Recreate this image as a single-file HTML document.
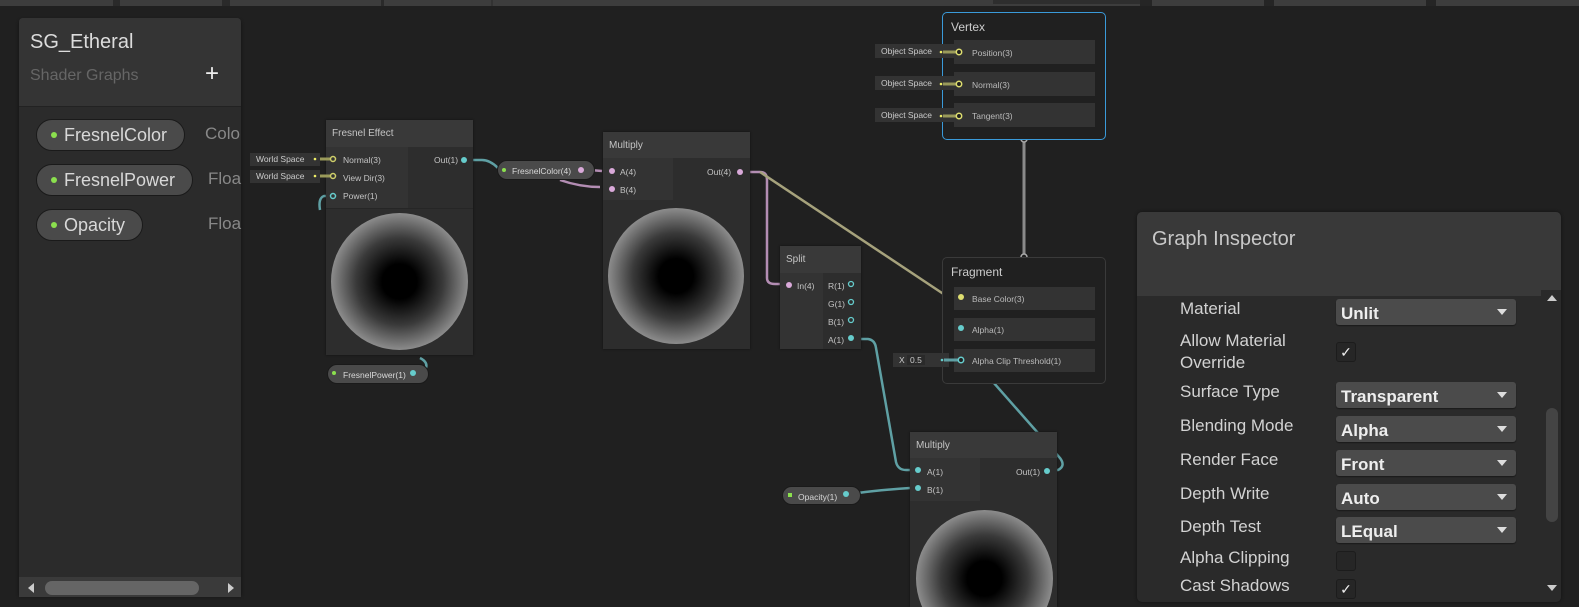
<!DOCTYPE html>
<html><head><meta charset="utf-8"><style>
*{margin:0;padding:0;box-sizing:border-box}
html{width:1579px;height:607px;overflow:hidden}
body{width:1579px;height:607px;background:#202020;position:relative;overflow:hidden;font-family:"Liberation Sans",sans-serif;color:#c8c8c8}
.a{position:absolute}
.node{position:absolute;background:#2d2d2d;box-shadow:0 0 2px #111;overflow:hidden}
.hd{position:absolute;left:0;right:0;top:0;background:#393939;font-size:10px;color:#c4c4c4;padding-left:6px}
.sm{font-size:8.5px;color:#c4c4c4;position:absolute;white-space:nowrap}
.sph{position:absolute;border-radius:50%;background:radial-gradient(circle,#000 0%,#000 18%,#3a3a3a 45%,#8a8a8a 70%,#d0d0d0 90%,#f0f0f0 100%)}
.pill{position:absolute;background:#4a4a4a;border:1.5px solid #1a1a1a;border-radius:18px;color:#d8d8d8;white-space:nowrap}
.gd{position:absolute;width:6px;height:6px;border-radius:50%;background:#8be04e}
.row{position:absolute;left:11px;width:141px;background:#333;font-size:8.5px;color:#bbb;padding-left:18px}
.os{position:absolute;background:#333;font-size:8.5px;color:#ccc;padding-left:6px;white-space:nowrap}
.lbl{position:absolute;left:43px;font-size:17px;color:#d2d2d2;white-space:nowrap}
.dd{position:absolute;left:199px;width:180px;height:26px;background:#4b4b4b;border-radius:3px;font-size:17px;font-weight:bold;color:#eee;padding:5px 0 0 5px;box-shadow:0 1px 1px #1a1a1a}
.dd:after{content:"";position:absolute;right:9px;top:10px;border-left:5px solid transparent;border-right:5px solid transparent;border-top:6px solid #ddd}
.cb{position:absolute;left:199px;width:20px;height:20px;background:#262626;border:1px solid #1c1c1c;border-radius:3px;color:#eee;font-size:14px;text-align:center;line-height:19px}
</style></head><body>
<div class="a" style="left:0;top:0;width:1579px;height:6px;background:#3d3d3d"></div>
<div class="a" style="left:113px;top:0;width:7px;height:6px;background:#2a2a2a"></div>
<div class="a" style="left:222px;top:0;width:8px;height:6px;background:#2a2a2a"></div>
<div class="a" style="left:381px;top:0;width:3px;height:6px;background:#2a2a2a"></div>
<div class="a" style="left:491px;top:0;width:2px;height:6px;background:#333"></div>
<div class="a" style="left:993px;top:0;width:147px;height:4px;background:#2e2e2e"></div>
<div class="a" style="left:1140px;top:0;width:12px;height:6px;background:#252525"></div>
<div class="a" style="left:1264px;top:0;width:10px;height:6px;background:#252525"></div>
<div class="a" style="left:1426px;top:0;width:10px;height:6px;background:#252525"></div>

<svg class="a" style="left:0;top:0" width="1579" height="607">
<g fill="none" stroke-width="2.5">
<path d="M465 160 L482 160 Q490 160 498 168" stroke="#5fa0a4"/>
<path d="M330 196 L324 196 Q318 198 320 210" stroke="#5fa0a4"/>
<path d="M420 358 Q428 362 426 368" stroke="#5fa0a4"/>
<path d="M590 170 L602 171" stroke="#b38db3"/>
<path d="M560 180 Q580 187 600 187" stroke="#b38db3"/>
<path d="M742 172 L760 172 Q767 172 767 180 L767 278 Q767 284 775 284 L790 284" stroke="#b38db3"/>
<path d="M760 172 L948 297" stroke="#a6a27c"/>
<path d="M852 339 L868 339 Q875 340 876 348 L896 462 Q898 470 906 470 L918 470" stroke="#5fa0a4"/>
<path d="M858 493 Q880 490 910 488" stroke="#5fa0a4"/>
<path d="M1050 470 L1058 470 Q1066 466 1060 458 L956 340 Q950 333 957 328" stroke="#5fa0a4"/>
<path d="M1024 139 L1024 257" stroke="#8a8a8a" stroke-width="3"/>
</g>
<g fill="#202020" stroke="#aaa" stroke-width="1.5"><circle cx="1024" cy="139" r="3"/><circle cx="1024" cy="257" r="3"/></g>
</svg>

<div class="a" style="left:19px;top:18px;width:222px;height:576px;background:#2b2b2b;border-radius:4px 4px 0 0;box-shadow:0 2px 3px #111"></div>
<div class="a" style="left:19px;top:18px;width:222px;height:89px;background:#343434;border-radius:4px 4px 0 0;border-bottom:1px solid #222"></div>
<div class="a" style="left:30px;top:31px;font-size:20px;color:#dcdcdc">SG_Etheral</div>
<div class="a" style="left:30px;top:67px;font-size:16px;color:#666">Shader Graphs</div>
<div class="a" style="left:205px;top:60px;font-size:24px;color:#eee">+</div>
<div class="pill" style="left:36px;top:119px;width:149px;height:32px;font-size:18px;padding:5px 0 0 27px">FresnelColor</div>
<div class="gd" style="left:51px;top:132px"></div>
<div class="a" style="left:205px;top:124px;font-size:17px;color:#888">Colo</div>
<div class="pill" style="left:36px;top:164px;width:157px;height:32px;font-size:18px;padding:5px 0 0 27px">FresnelPower</div>
<div class="gd" style="left:51px;top:177px"></div>
<div class="a" style="left:208px;top:169px;font-size:17px;color:#888">Floa</div>
<div class="pill" style="left:36px;top:209px;width:107px;height:32px;font-size:18px;padding:5px 0 0 27px">Opacity</div>
<div class="gd" style="left:51px;top:222px"></div>
<div class="a" style="left:208px;top:214px;font-size:17px;color:#888">Floa</div>
<div class="a" style="left:19px;top:577px;width:222px;height:20px;background:#3a3a3a"></div>
<div class="a" style="left:45px;top:581px;width:154px;height:14px;background:#656565;border-radius:7px"></div>
<div class="a" style="left:28px;top:583px;border-top:5px solid transparent;border-bottom:5px solid transparent;border-right:6px solid #ccc"></div>
<div class="a" style="left:228px;top:583px;border-top:5px solid transparent;border-bottom:5px solid transparent;border-left:6px solid #ccc"></div>

<div class="os" style="left:250px;top:153px;width:70px;height:13px;padding-top:1px">World Space</div>
<div class="os" style="left:250px;top:170px;width:70px;height:13px;padding-top:1px">World Space</div>
<svg class="a" style="left:310px;top:150px;z-index:2" width="30" height="50"><g stroke="#cfcf6a" fill="none" stroke-width="1.5"><line x1="10" y1="9" x2="20" y2="9" stroke="#9a9a5a" stroke-width="3"/><line x1="10" y1="26" x2="20" y2="26" stroke="#9a9a5a" stroke-width="3"/><circle cx="23" cy="9" r="2.5"/><circle cx="23" cy="26" r="2.5"/><circle cx="23" cy="46" r="2.5" stroke="#6cc"/></g><circle cx="5" cy="9" r="1.3" fill="#ee6"/><circle cx="5" cy="26" r="1.3" fill="#ee6"/></svg>

<div class="node" style="left:326px;top:120px;width:147px;height:235px">
<div class="hd" style="height:27px;padding-top:8px">Fresnel Effect</div>
<div class="a" style="left:0;top:27px;width:82px;height:61px;background:#333"></div>
<div class="sm" style="left:17px;top:35px">Normal(3)</div>
<div class="sm" style="left:17px;top:53px">View Dir(3)</div>
<div class="sm" style="left:17px;top:71px">Power(1)</div>
<div class="sm" style="left:108px;top:35px">Out(1)</div>
<div class="a" style="left:135px;top:37px;width:6px;height:6px;border-radius:50%;background:#6cc"></div>
<div class="a" style="left:0;top:88px;width:147px;height:1px;background:#262626"></div>
<div class="sph" style="left:5px;top:93px;width:137px;height:137px"></div>
</div>

<div class="pill" style="left:327px;top:364px;width:102px;height:20px;font-size:8.5px;padding:5px 0 0 15px;border-width:1px">FresnelPower(1)</div>
<div class="gd" style="left:332px;top:371px;width:4px;height:4px"></div>
<div class="a" style="left:410px;top:370px;width:6px;height:6px;border-radius:50%;background:#6cc"></div>

<div class="pill" style="left:497px;top:160px;width:98px;height:20px;font-size:8.5px;padding:5px 0 0 14px;border-width:1px">FresnelColor(4)</div>
<div class="gd" style="left:502px;top:168px;width:4px;height:4px"></div>
<div class="a" style="left:578px;top:167px;width:6px;height:6px;border-radius:50%;background:#d9a9d9"></div>

<div class="node" style="left:603px;top:132px;width:147px;height:217px">
<div class="hd" style="height:26px;padding-top:8px">Multiply</div>
<div class="a" style="left:0;top:26px;width:70px;height:42px;background:#333"></div>
<div class="a" style="left:6px;top:36px;width:6px;height:6px;border-radius:50%;background:#d9a9d9"></div>
<div class="a" style="left:6px;top:54px;width:6px;height:6px;border-radius:50%;background:#d9a9d9"></div>
<div class="sm" style="left:17px;top:35px">A(4)</div>
<div class="sm" style="left:17px;top:53px">B(4)</div>
<div class="sm" style="left:104px;top:35px">Out(4)</div>
<div class="a" style="left:134px;top:37px;width:6px;height:6px;border-radius:50%;background:#d9a9d9"></div>
<div class="sph" style="left:5px;top:76px;width:136px;height:136px"></div>
</div>

<div class="node" style="left:780px;top:246px;width:81px;height:103px">
<div class="hd" style="height:27px;padding-top:8px">Split</div>
<div class="a" style="left:0;top:27px;width:43px;height:76px;background:#333"></div>
<div class="a" style="left:6px;top:36px;width:6px;height:6px;border-radius:50%;background:#d9a9d9"></div>
<div class="sm" style="left:17px;top:35px">In(4)</div>
<div class="sm" style="left:48px;top:35px">R(1)</div>
<div class="sm" style="left:48px;top:53px">G(1)</div>
<div class="sm" style="left:48px;top:71px">B(1)</div>
<div class="sm" style="left:48px;top:89px">A(1)</div>
<svg class="a" style="left:66px;top:33px" width="10" height="70"><g fill="none" stroke="#6cc" stroke-width="1.3"><circle cx="5" cy="5" r="2.5"/><circle cx="5" cy="23" r="2.5"/><circle cx="5" cy="41" r="2.5"/></g><circle cx="5" cy="59" r="3" fill="#6cc"/></svg>
</div>

<div class="a" style="left:942px;top:12px;width:164px;height:128px;border:1.5px solid #3a9ad9;border-radius:5px;background:#202020">
<div class="a" style="left:8px;top:7px;font-size:12px;color:#ccc">Vertex</div>
<div class="row" style="top:27px;height:24px;padding-top:8px">Position(3)</div>
<div class="row" style="top:59px;height:24px;padding-top:8px">Normal(3)</div>
<div class="row" style="top:90px;height:24px;padding-top:8px">Tangent(3)</div>
</div>
<div class="os" style="left:875px;top:44px;width:80px;height:14px;padding-top:2px">Object Space</div>
<div class="os" style="left:875px;top:76px;width:80px;height:14px;padding-top:2px">Object Space</div>
<div class="os" style="left:875px;top:108px;width:80px;height:14px;padding-top:2px">Object Space</div>
<svg class="a" style="left:935px;top:40px" width="30" height="90"><g><line x1="8" y1="12" x2="22" y2="12" stroke="#9a9a5a" stroke-width="3"/><line x1="8" y1="44" x2="22" y2="44" stroke="#9a9a5a" stroke-width="3"/><line x1="8" y1="76" x2="22" y2="76" stroke="#9a9a5a" stroke-width="3"/></g><g fill="#202020" stroke="#dede70" stroke-width="1.5"><circle cx="24" cy="12" r="2.7"/><circle cx="24" cy="44" r="2.7"/><circle cx="24" cy="76" r="2.7"/></g><g fill="#ee6"><circle cx="6" cy="12" r="1.3"/><circle cx="6" cy="44" r="1.3"/><circle cx="6" cy="76" r="1.3"/></g></svg>

<div class="a" style="left:942px;top:257px;width:164px;height:127px;border:1px solid #3a3a3a;border-radius:5px;background:#202020">
<div class="a" style="left:8px;top:7px;font-size:12px;color:#ccc">Fragment</div>
<div class="row" style="top:29px;height:23px;padding-top:7px">Base Color(3)</div>
<div class="row" style="top:60px;height:23px;padding-top:7px">Alpha(1)</div>
<div class="row" style="top:91px;height:23px;padding-top:7px">Alpha Clip Threshold(1)</div>
</div>
<div class="a" style="left:958px;top:294px;width:6px;height:6px;border-radius:50%;background:#dede70"></div>
<div class="a" style="left:958px;top:325px;width:6px;height:6px;border-radius:50%;background:#6cc"></div>
<div class="os" style="left:893px;top:353px;width:56px;height:14px;padding-top:2px">X <span style="background:#2a2a2a;padding:0 3px">0.5</span></div>
<svg class="a" style="left:938px;top:353px" width="30" height="14"><line x1="6" y1="7" x2="20" y2="7" stroke="#5fa0a4" stroke-width="3"/><circle cx="23" cy="7" r="2.7" fill="#202020" stroke="#6cc" stroke-width="1.5"/><circle cx="4" cy="7" r="1.3" fill="#6cc"/></svg>

<div class="node" style="left:910px;top:432px;width:147px;height:175px">
<div class="hd" style="height:26px;padding-top:8px">Multiply</div>
<div class="a" style="left:0;top:26px;width:70px;height:43px;background:#333"></div>
<div class="a" style="left:5px;top:35px;width:6px;height:6px;border-radius:50%;background:#6cc"></div>
<div class="a" style="left:5px;top:53px;width:6px;height:6px;border-radius:50%;background:#6cc"></div>
<div class="sm" style="left:17px;top:35px">A(1)</div>
<div class="sm" style="left:17px;top:53px">B(1)</div>
<div class="sm" style="left:106px;top:35px">Out(1)</div>
<div class="a" style="left:134px;top:36px;width:6px;height:6px;border-radius:50%;background:#6cc"></div>
<div class="sph" style="left:6px;top:78px;width:137px;height:137px"></div>
</div>
<div class="pill" style="left:782px;top:486px;width:79px;height:19px;font-size:8.5px;padding:5px 0 0 15px;border-width:1px">Opacity(1)</div>
<div class="a" style="left:788px;top:493px;width:4px;height:4px;background:#8be04e"></div>
<div class="a" style="left:843px;top:491px;width:6px;height:6px;border-radius:50%;background:#6cc"></div>

<div class="a" style="left:1137px;top:212px;width:424px;height:390px;background:#2a2a2a;border-radius:5px;box-shadow:0 0 3px #111;overflow:hidden">
<div class="a" style="left:0;top:0;width:424px;height:84px;background:#393939"></div>
<div class="a" style="left:15px;top:16px;font-size:20px;color:#c8c8c8">Graph Inspector</div>
<div class="lbl" style="top:87px">Material</div>
<div class="dd" style="top:87px">Unlit</div>
<div class="lbl" style="top:118px;line-height:22px">Allow Material<br>Override</div>
<div class="cb" style="top:130px">✓</div>
<div class="lbl" style="top:170px">Surface Type</div>
<div class="dd" style="top:170px">Transparent</div>
<div class="lbl" style="top:204px">Blending Mode</div>
<div class="dd" style="top:204px">Alpha</div>
<div class="lbl" style="top:238px">Render Face</div>
<div class="dd" style="top:238px">Front</div>
<div class="lbl" style="top:272px">Depth Write</div>
<div class="dd" style="top:272px">Auto</div>
<div class="lbl" style="top:305px">Depth Test</div>
<div class="dd" style="top:305px">LEqual</div>
<div class="lbl" style="top:336px">Alpha Clipping</div>
<div class="cb" style="top:339px"></div>
<div class="lbl" style="top:364px">Cast Shadows</div>
<div class="cb" style="top:367px">✓</div>
<div class="a" style="left:404px;top:78px;width:20px;height:312px;background:#2a2a2a"></div>
<div class="a" style="left:410px;top:83px;border-left:5px solid transparent;border-right:5px solid transparent;border-bottom:6px solid #ccc"></div>
<div class="a" style="left:410px;top:373px;border-left:5px solid transparent;border-right:5px solid transparent;border-top:6px solid #ccc"></div>
<div class="a" style="left:409px;top:196px;width:12px;height:114px;background:#444;border-radius:6px"></div>
</div>
</body></html>
